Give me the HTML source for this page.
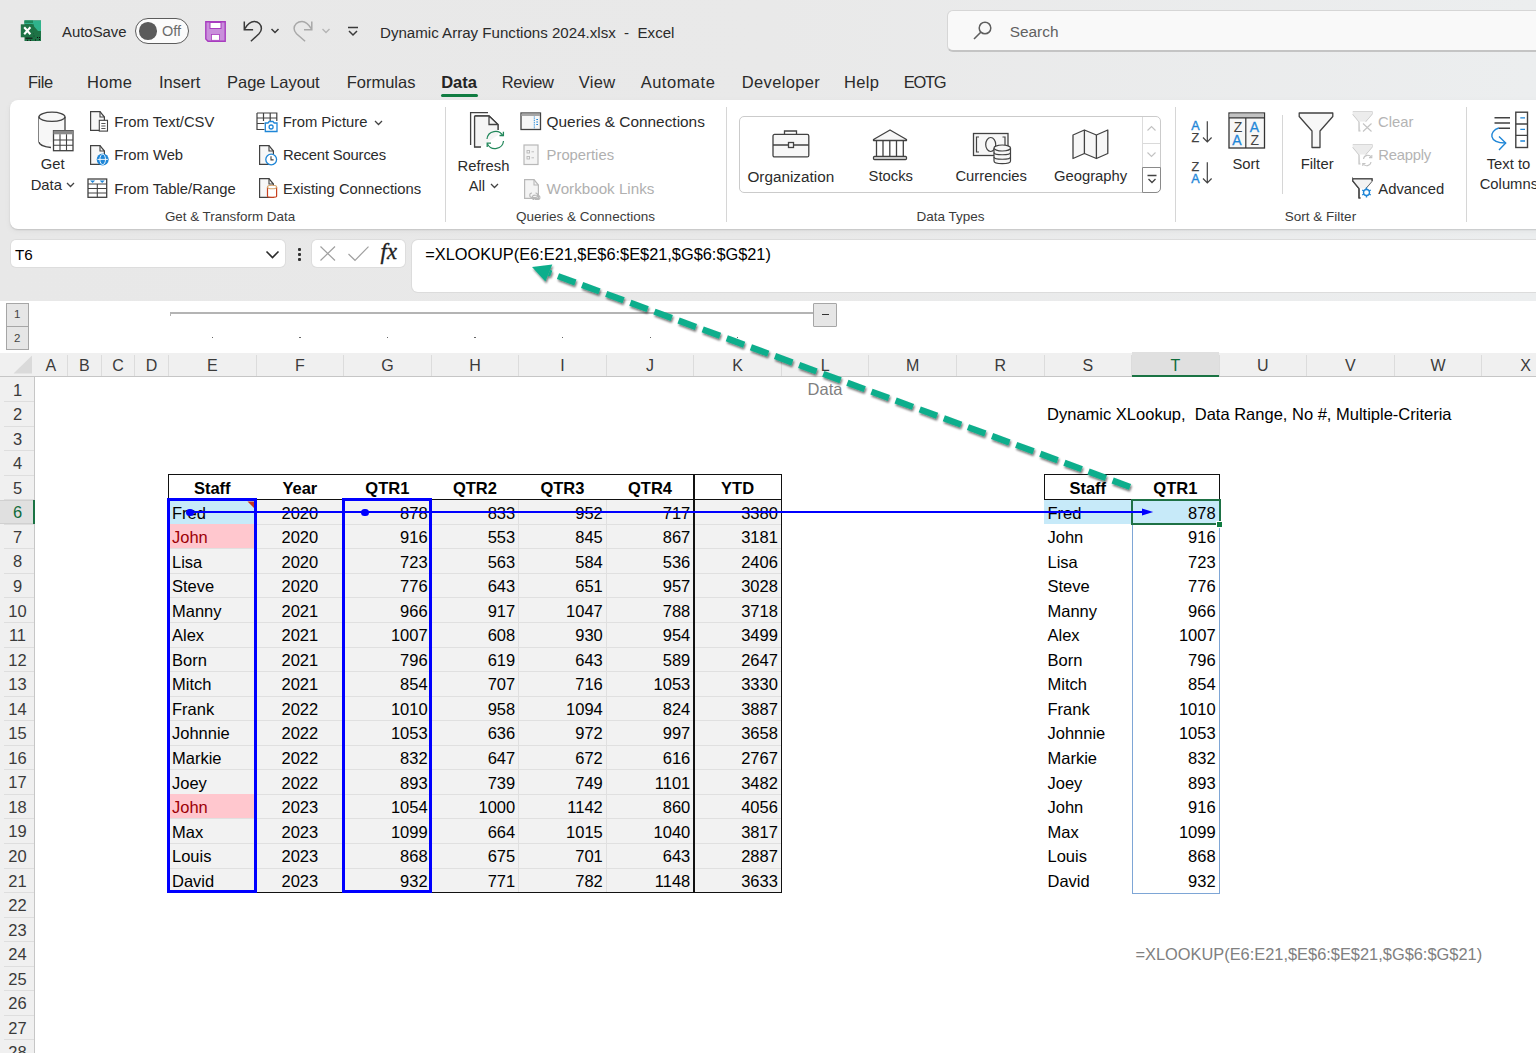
<!DOCTYPE html>
<html><head><meta charset="utf-8"><style>
html,body{margin:0;padding:0;}
body{width:1536px;height:1053px;position:relative;overflow:hidden;background:#fff;font-family:"Liberation Sans", sans-serif;}
.t{position:absolute;line-height:1;white-space:pre;}
svg{overflow:visible;}
</style></head><body>
<div style="position:absolute;left:0.00px;top:0.00px;width:1536.00px;height:301.00px;background:linear-gradient(90deg,#e8e8e8 0%,#e9e9e9 50%,#eceeef 100%);"></div><div style="position:absolute;left:10.00px;top:100.00px;width:1560.00px;height:128.50px;background:#fff;border-radius:8px;box-shadow:0 1px 1.5px rgba(0,0,0,0.13),0 2px 6px rgba(0,0,0,0.05);"></div><svg style="position:absolute;left:37px;top:111px;" width="38" height="41" viewBox="0 0 38 41">
<path d="M2 5.5 V31 C2 34 8 36 14 36.5" fill="#f7f7f7" stroke="#424242" stroke-width="1.3"/>
<path d="M2 5.5 V31 H16 V19 H28 V5.5 Z" fill="#f7f7f7"/>
<ellipse cx="15" cy="5.8" rx="13" ry="4.6" fill="#f7f7f7" stroke="#424242" stroke-width="1.3"/>
<path d="M28 6 V19" stroke="#424242" stroke-width="1.3"/>
<rect x="16.5" y="19.7" width="19.5" height="20" fill="#fff" stroke="#424242" stroke-width="1.3"/>
<rect x="16.5" y="19.7" width="19.5" height="3.6" fill="#8a8a8a"/>
<path d="M23 23.3 V39.7 M29.5 23.3 V39.7 M16.5 29 H36 M16.5 34.3 H36" stroke="#424242" stroke-width="1.1"/>
</svg><div class="t" style="left:32.70px;width:40px;text-align:center;top:157.27px;font-size:14.8px;color:#2b2b2b;font-weight:normal;">Get</div><div class="t" style="left:30.70px;top:177.77px;font-size:14.8px;color:#2b2b2b;font-weight:normal;">Data</div><svg style="position:absolute;left:66px;top:182px;" width="9" height="6" viewBox="0 0 9 6"><path d="M1 1 L4.5 4.5 L8 1" fill="none" stroke="#424242" stroke-width="1.3"/></svg><svg style="position:absolute;left:89px;top:110px;" width="20" height="22" viewBox="0 0 20 22"><path d="M1.6 1.6 H11 L15.4 7 V20.4 H1.6 Z" fill="#f7f7f7" stroke="#424242" stroke-width="1.2"/><path d="M11 1.6 V7 H15.4" fill="none" stroke="#424242" stroke-width="1.1"/><rect x="10.3" y="10.3" width="8.2" height="10.8" fill="#fff" stroke="#424242" stroke-width="1.1"/><path d="M12.3 13.5 H16.5 M12.3 16 H16.5 M12.3 18.5 H16.5" stroke="#424242" stroke-width="0.9"/></svg><div class="t" style="left:114.30px;top:114.67px;font-size:14.8px;color:#2b2b2b;font-weight:normal;">From Text/CSV</div><svg style="position:absolute;left:89px;top:143.5px;" width="20" height="22" viewBox="0 0 20 22"><path d="M1.6 1.6 H11 L15.4 7 V20.4 H1.6 Z" fill="#f7f7f7" stroke="#424242" stroke-width="1.2"/><path d="M11 1.6 V7 H15.4" fill="none" stroke="#424242" stroke-width="1.1"/><circle cx="13.7" cy="15.4" r="6" fill="#1f86d7"/><path d="M8.5 15.4 H18.9" stroke="#fff" stroke-width="0.9"/><ellipse cx="13.7" cy="15.4" rx="2.8" ry="5.2" fill="none" stroke="#fff" stroke-width="0.9"/></svg><div class="t" style="left:114.30px;top:148.37px;font-size:14.8px;color:#2b2b2b;font-weight:normal;">From Web</div><svg style="position:absolute;left:87px;top:177.5px;" width="21" height="21" viewBox="0 0 21 21"><rect x="1" y="1" width="18.7" height="18.3" fill="#fff" stroke="#424242" stroke-width="1.3"/><path d="M1 6 H19.7 M1 10.5 H19.7 M1 15 H19.7 M10.3 6 V19.3" stroke="#424242" stroke-width="1.1"/><path d="M3 2.4 L8.2 2.4 L5.6 5 Z M12.6 2.4 L17.8 2.4 L15.2 5 Z" fill="#1f86d7"/></svg><div class="t" style="left:114.30px;top:181.97px;font-size:14.8px;color:#2b2b2b;font-weight:normal;">From Table/Range</div><svg style="position:absolute;left:255.5px;top:111.5px;" width="23" height="21" viewBox="0 0 23 21"><path d="M1 1 H20.8 V9 M1 1 V17.5 H8.5 M1 6 H20.8 M1 11.5 H8.5 M7.5 1 V9 M14.2 1 V9" fill="none" stroke="#424242" stroke-width="1.2"/><path d="M9.3 11 H12 L13.2 9.5 H17 L18.2 11 H21 V19.5 H9.3 Z" fill="#fff" stroke="#1f86d7" stroke-width="1.3"/><circle cx="15.1" cy="15" r="2" fill="none" stroke="#1f86d7" stroke-width="1.3"/></svg><div class="t" style="left:282.70px;top:114.67px;font-size:14.8px;color:#2b2b2b;font-weight:normal;">From Picture</div><svg style="position:absolute;left:374px;top:120px;" width="9" height="6" viewBox="0 0 9 6"><path d="M1 1 L4.5 4.5 L8 1" fill="none" stroke="#424242" stroke-width="1.3"/></svg><svg style="position:absolute;left:258px;top:143.5px;" width="21" height="22" viewBox="0 0 21 22"><path d="M1.6 1.6 H11 L15.4 7 V20.4 H1.6 Z" fill="#f7f7f7" stroke="#424242" stroke-width="1.2"/><path d="M11 1.6 V7 H15.4" fill="none" stroke="#424242" stroke-width="1.1"/><circle cx="13.2" cy="15.5" r="5.4" fill="#fff" stroke="#1f86d7" stroke-width="1.3"/><path d="M13 12.3 V15.9 H15.6" fill="none" stroke="#424242" stroke-width="1.1"/></svg><div class="t" style="left:283.00px;top:148.37px;font-size:14.8px;color:#2b2b2b;font-weight:normal;letter-spacing:-0.17px;">Recent Sources</div><svg style="position:absolute;left:258px;top:177px;" width="21" height="22" viewBox="0 0 21 22"><path d="M1.6 1.6 H11 L15.4 7 V20.4 H1.6 Z" fill="#f7f7f7" stroke="#424242" stroke-width="1.2"/><path d="M11 1.6 V7 H15.4" fill="none" stroke="#424242" stroke-width="1.1"/><path d="M9.5 10 V19.3 C9.5 20.6 18.6 20.6 18.6 19.3 V10" fill="#fff" stroke="#c9401e" stroke-width="1.2"/><ellipse cx="14.05" cy="10" rx="4.55" ry="1.8" fill="#fff" stroke="#d4a26a" stroke-width="1.1"/></svg><div class="t" style="left:283.00px;top:181.97px;font-size:14.8px;color:#2b2b2b;font-weight:normal;">Existing Connections</div><div class="t" style="left:130.00px;width:200px;text-align:center;top:209.66px;font-size:13.4px;color:#3b3b3b;font-weight:normal;">Get &amp; Transform Data</div><div style="position:absolute;left:445.00px;top:107.00px;width:1.00px;height:115.00px;background:#d6d6d6;"></div><svg style="position:absolute;left:469px;top:111px;" width="38" height="40" viewBox="0 0 38 40">
<path d="M1.6 34 V1.6 H19" fill="none" stroke="#424242" stroke-width="1.3"/>
<path d="M5.6 5 H20 L29 13.5 V19 M11 35.5 H5.6 V5" fill="#f5f5f5" stroke="#424242" stroke-width="1.3"/>
<path d="M5.6 5 H20 L29 13.5 V24 L12 36 H5.6 Z" fill="#f5f5f5"/>
<path d="M5.6 5 H20 L29 13.5 V19 M12 36 H5.6 V5 M20 5 V13.5 H29" fill="none" stroke="#424242" stroke-width="1.3"/>
<path d="M18 28 A8.5 8.5 0 0 1 34 25" fill="none" stroke="#21875a" stroke-width="1.2"/>
<path d="M34.5 36 A8.5 8.5 0 0 1 18.5 39" fill="none" stroke="#21875a" stroke-width="1.2" transform="translate(0,-6)"/>
<path d="M30.5 24.5 H34.4 V20.8" fill="none" stroke="#21875a" stroke-width="1.3"/>
<path d="M22 32.2 H18.2 V36" fill="none" stroke="#21875a" stroke-width="1.3"/>
</svg><div class="t" style="left:453.50px;width:60px;text-align:center;top:158.57px;font-size:14.8px;color:#2b2b2b;font-weight:normal;">Refresh</div><div class="t" style="left:468.70px;top:178.57px;font-size:14.8px;color:#2b2b2b;font-weight:normal;">All</div><svg style="position:absolute;left:490px;top:183px;" width="9" height="6" viewBox="0 0 9 6"><path d="M1 1 L4.5 4.5 L8 1" fill="none" stroke="#424242" stroke-width="1.3"/></svg><svg style="position:absolute;left:519.5px;top:111.5px;" width="22" height="19" viewBox="0 0 22 19"><rect x="1" y="1" width="19.5" height="16.5" fill="#f7f7f7" stroke="#424242" stroke-width="1.3"/><rect x="1.5" y="1.5" width="18.5" height="2.5" fill="#a6a6a6"/><path d="M14.3 4.5 V17" stroke="#1f86d7" stroke-width="1" stroke-dasharray="1 0.8"/><path d="M16.3 7.5 H18 M16.3 10 H18 M16.3 12.5 H18" stroke="#1f86d7" stroke-width="1"/></svg><div class="t" style="left:546.60px;top:114.26px;font-size:15.4px;color:#2b2b2b;font-weight:normal;">Queries &amp; Connections</div><svg style="position:absolute;left:522.5px;top:143.5px;" width="17" height="22" viewBox="0 0 17 22"><rect x="1" y="1" width="14" height="19.5" fill="#f4f4f4" stroke="#b8b8b8" stroke-width="1.2"/><rect x="4" y="6.5" width="2.5" height="2.5" fill="none" stroke="#b8b8b8" stroke-width="0.9"/><rect x="4" y="12.5" width="2.5" height="2.5" fill="none" stroke="#b8b8b8" stroke-width="0.9"/><path d="M8.5 7.8 H11 M8.5 13.8 H11" stroke="#b8b8b8" stroke-width="0.9"/></svg><div class="t" style="left:546.60px;top:147.67px;font-size:14.8px;color:#b0b0b0;font-weight:normal;">Properties</div><svg style="position:absolute;left:522.5px;top:177.5px;" width="20" height="22" viewBox="0 0 20 22"><path d="M1.6 1.6 H11 L15.4 7 V20.4 H1.6 Z" fill="#f4f4f4" stroke="#b8b8b8" stroke-width="1.2"/><path d="M11 1.6 V7 H15.4" fill="none" stroke="#b8b8b8" stroke-width="1.1"/><path d="M9 15 C6 15 6 19.5 9 19.5 H12.5 C15.5 19.5 15.5 15 12.5 15 M11.5 17.3 C8.5 17.3 8.5 21.5 11.5 21.5" fill="none" stroke="#b8b8b8" stroke-width="1.1"/><path d="M10.5 17.3 H14.5 C17.7 17.3 17.7 21.5 14.5 21.5 H12" fill="none" stroke="#b8b8b8" stroke-width="1.1"/></svg><div class="t" style="left:546.60px;top:181.03px;font-size:15.2px;color:#b0b0b0;font-weight:normal;">Workbook Links</div><div class="t" style="left:485.50px;width:200px;text-align:center;top:209.57px;font-size:13.5px;color:#3b3b3b;font-weight:normal;">Queries &amp; Connections</div><div style="position:absolute;left:726.00px;top:107.00px;width:1.00px;height:115.00px;background:#d6d6d6;"></div><div style="position:absolute;left:739.30px;top:116.20px;width:421.50px;height:76.50px;border:1px solid #cbcbcb;border-radius:5px;box-sizing:border-box;"></div><div style="position:absolute;left:1142.30px;top:116.70px;width:1.00px;height:76.00px;background:#dcdcdc;"></div><div style="position:absolute;left:1142.80px;top:142.60px;width:17.50px;height:1.20px;background:#dadada;"></div><div style="position:absolute;left:1142.30px;top:167.30px;width:18.50px;height:25.50px;border:1px solid #8a8a8a;border-radius:0 0 5px 0;box-sizing:border-box;background:#fff;"></div><svg style="position:absolute;left:1146px;top:125px;" width="11" height="7" viewBox="0 0 11 7"><path d="M1.5 5.5 L5.5 1.5 L9.5 5.5" fill="none" stroke="#c2c2c2" stroke-width="1.1"/></svg><svg style="position:absolute;left:1146px;top:151px;" width="11" height="7" viewBox="0 0 11 7"><path d="M1.5 1.5 L5.5 5.5 L9.5 1.5" fill="none" stroke="#c2c2c2" stroke-width="1.1"/></svg><svg style="position:absolute;left:1145.5px;top:174px;" width="12" height="11" viewBox="0 0 12 11"><path d="M1.5 1.5 H10.5 M2.5 5 L6 8.5 L9.5 5" fill="none" stroke="#424242" stroke-width="1.3"/></svg><svg style="position:absolute;left:772px;top:130px;" width="38" height="28" viewBox="0 0 38 28"><rect x="1" y="4.4" width="35.8" height="22.5" rx="1.5" fill="#f7f7f7" stroke="#424242" stroke-width="1.3"/><path d="M12.5 4.4 V1 H24.5 V4.4" fill="none" stroke="#424242" stroke-width="1.3"/><path d="M1 15 H16.5 M21.5 15 H36.8" stroke="#424242" stroke-width="1.3"/><rect x="16.5" y="12.5" width="5" height="5" fill="#f7f7f7" stroke="#424242" stroke-width="1.3"/></svg><div class="t" style="left:730.80px;width:120px;text-align:center;top:168.65px;font-size:15.3px;color:#2b2b2b;font-weight:normal;">Organization</div><svg style="position:absolute;left:871.5px;top:128.5px;" width="37" height="32" viewBox="0 0 37 32"><path d="M1.5 10.5 L18 1 L34.5 10.5 V11.5 H1.5 Z" fill="#f7f7f7" stroke="#424242" stroke-width="1.3" stroke-linejoin="round"/><path d="M4.5 11.5 V27.5 M11 11.5 V27.5 M17.8 11.5 V27.5 M24.5 11.5 V27.5 M31.3 11.5 V27.5" stroke="#424242" stroke-width="1.3"/><rect x="1.5" y="27.5" width="33" height="3" rx="1" fill="#f7f7f7" stroke="#424242" stroke-width="1.3"/></svg><div class="t" style="left:850.80px;width:80px;text-align:center;top:169.07px;font-size:14.8px;color:#2b2b2b;font-weight:normal;">Stocks</div><svg style="position:absolute;left:971.5px;top:132px;" width="42" height="34" viewBox="0 0 42 34"><rect x="1.5" y="1.5" width="34.5" height="22" fill="#f7f7f7" stroke="#424242" stroke-width="1.3"/><path d="M7 5 H4.5 V20 H7 M30.5 5 H33 V20 H30.5" fill="none" stroke="#424242" stroke-width="1.2"/><ellipse cx="18.7" cy="12.5" rx="5" ry="7" fill="none" stroke="#424242" stroke-width="1.2"/><g fill="#f7f7f7" stroke="#424242" stroke-width="1.2"><path d="M22 16 V29 C22 32.5 38.5 32.5 38.5 29 V16"/><ellipse cx="30.25" cy="16" rx="8.25" ry="3"/><path d="M22 20.5 C22 23.5 38.5 23.5 38.5 20.5 M22 25 C22 28 38.5 28 38.5 25" fill="none"/></g></svg><div class="t" style="left:941.20px;width:100px;text-align:center;top:168.77px;font-size:14.8px;color:#2b2b2b;font-weight:normal;">Currencies</div><svg style="position:absolute;left:1071.5px;top:128.5px;" width="38" height="32" viewBox="0 0 38 32"><path d="M1 6 L12.4 1 L24.4 6 L35.8 1 V24.5 L24.4 29.5 L12.4 24.5 L1 29.5 Z" fill="#f7f7f7" stroke="#424242" stroke-width="1.3" stroke-linejoin="round"/><path d="M12.4 1 V24.5 M24.4 6 V29.5" stroke="#424242" stroke-width="1.3"/></svg><div class="t" style="left:1040.60px;width:100px;text-align:center;top:168.77px;font-size:14.8px;color:#2b2b2b;font-weight:normal;">Geography</div><div class="t" style="left:890.50px;width:120px;text-align:center;top:209.57px;font-size:13.5px;color:#3b3b3b;font-weight:normal;">Data Types</div><div style="position:absolute;left:1174.50px;top:107.00px;width:1.00px;height:115.00px;background:#d6d6d6;"></div><svg style="position:absolute;left:1190.5px;top:120.5px;" width="22" height="22" viewBox="0 0 22 22"><text x="0.2" y="9.3" font-family="Liberation Sans" font-size="12.6" fill="#1f86d7" stroke="#1f86d7" stroke-width="0.35">A</text><text x="0.6" y="21" font-family="Liberation Sans" font-size="12.6" fill="#424242" stroke="#424242" stroke-width="0.25">Z</text><path d="M16.3 0.3 V20.5 M12 16.5 L16.3 20.8 L20.6 16.5" fill="none" stroke="#424242" stroke-width="1.2"/></svg><svg style="position:absolute;left:1190.5px;top:161.5px;" width="22" height="22" viewBox="0 0 22 22"><text x="0.2" y="21" font-family="Liberation Sans" font-size="12.6" fill="#1f86d7" stroke="#1f86d7" stroke-width="0.35">A</text><text x="0.6" y="9.3" font-family="Liberation Sans" font-size="12.6" fill="#424242" stroke="#424242" stroke-width="0.25">Z</text><path d="M16.3 0.3 V20.5 M12 16.5 L16.3 20.8 L20.6 16.5" fill="none" stroke="#424242" stroke-width="1.2"/></svg><svg style="position:absolute;left:1227.5px;top:111.5px;" width="38" height="38" viewBox="0 0 38 38"><rect x="1" y="1" width="35.5" height="35" fill="#f7f7f7" stroke="#333" stroke-width="1.3"/><rect x="1.6" y="1.6" width="34.3" height="4" fill="#c2c2c2"/><path d="M1 5.8 H36.5 M17.8 5.8 V36" stroke="#333" stroke-width="1.2"/><g font-family="Liberation Sans" font-size="14"><text x="5.8" y="20" fill="#424242">Z</text><text x="4.3" y="33" fill="#1f86d7" stroke="#1f86d7" stroke-width="0.3">A</text><text x="21.8" y="20" fill="#1f86d7" stroke="#1f86d7" stroke-width="0.3">A</text><text x="22.6" y="33" fill="#424242">Z</text></g></svg><div class="t" style="left:1216.00px;width:60px;text-align:center;top:157.37px;font-size:14.8px;color:#2b2b2b;font-weight:normal;">Sort</div><div style="position:absolute;left:1281.50px;top:114.80px;width:1.00px;height:79.00px;background:#d6d6d6;"></div><svg style="position:absolute;left:1298px;top:111.5px;" width="37" height="37" viewBox="0 0 37 37"><path d="M1.2 1 H34.8 V4.5 L22 19 V35.5 H14 V19 L1.2 4.5 Z" fill="#f7f7f7" stroke="#424242" stroke-width="1.3" stroke-linejoin="round"/></svg><div class="t" style="left:1287.20px;width:60px;text-align:center;top:157.37px;font-size:14.8px;color:#2b2b2b;font-weight:normal;">Filter</div><svg style="position:absolute;left:1351.5px;top:110.5px;" width="22" height="22" viewBox="0 0 22 22"><path d="M0.8 0.8 H20 V3 L13.5 10.5 M7 10.5 V20 H8.5 M7 10.5 L0.8 3 Z" fill="#ececec" stroke="#c4c4c4" stroke-width="1.2"/><path d="M0.8 0.8 H20 V3 L13.5 10.5 H7 L0.8 3 Z" fill="#ececec"/><path d="M11 12.5 L19.5 20.5 M19.5 12.5 L11 20.5" stroke="#c4c4c4" stroke-width="1.1"/></svg><div class="t" style="left:1378.00px;top:114.87px;font-size:14.8px;color:#b4b4b4;font-weight:normal;">Clear</div><svg style="position:absolute;left:1351.5px;top:143.5px;" width="22" height="23" viewBox="0 0 22 23"><path d="M0.8 0.8 H20 V3 L13.5 10.5 M7 10.5 V20 H8.5 M7 10.5 L0.8 3 Z" fill="#ececec" stroke="#c4c4c4" stroke-width="1.2"/><path d="M0.8 0.8 H20 V3 L13.5 10.5 H7 L0.8 3 Z" fill="#ececec"/><path d="M11.5 15 A4.3 4.3 0 0 1 19.5 13.5 M19 18 A4.3 4.3 0 0 1 11 19.5" fill="none" stroke="#c4c4c4" stroke-width="1.1"/><path d="M17 13.6 H19.8 V11" fill="none" stroke="#c4c4c4" stroke-width="1.1"/><path d="M13.5 19.5 H10.8 V22" fill="none" stroke="#c4c4c4" stroke-width="1.1"/></svg><div class="t" style="left:1378.30px;top:148.07px;font-size:14.8px;color:#b4b4b4;font-weight:normal;letter-spacing:-0.22px;">Reapply</div><svg style="position:absolute;left:1351.5px;top:177.5px;" width="22" height="22" viewBox="0 0 22 22"><path d="M0.8 0.8 H20 V3 L13.5 10.5 M7 10.5 V20 H8.5 M7 10.5 L0.8 3 V0.8 Z" fill="#f3f3f3" stroke="#424242" stroke-width="1.2"/><path d="M0.8 0.8 H20 V3 L13.5 10.5 H7 L0.8 3 Z" fill="#f3f3f3"/><path d="M0.8 0.8 H20 V3 M0.8 0.8 V3 L7 10.5 V20 H8.5" fill="none" stroke="#424242" stroke-width="1.2"/><g transform="translate(14.5,14.5)" stroke="#1f86d7" stroke-width="1.4" fill="none"><circle r="3"/><path d="M0 -5 V-3 M0 3 V5 M-4.3 -2.5 L-2.6 -1.5 M2.6 1.5 L4.3 2.5 M-4.3 2.5 L-2.6 1.5 M2.6 -1.5 L4.3 -2.5"/></g></svg><div class="t" style="left:1378.30px;top:181.87px;font-size:14.8px;color:#2b2b2b;font-weight:normal;">Advanced</div><div class="t" style="left:1260.50px;width:120px;text-align:center;top:209.57px;font-size:13.5px;color:#3b3b3b;font-weight:normal;">Sort &amp; Filter</div><div style="position:absolute;left:1465.50px;top:107.00px;width:1.00px;height:115.00px;background:#d6d6d6;"></div><svg style="position:absolute;left:1487.5px;top:111px;" width="42" height="41" viewBox="0 0 42 41"><path d="M6.5 6.8 H22 M6.5 12 H22 M10.5 17.2 H22" stroke="#424242" stroke-width="1.5"/><rect x="27.8" y="1.2" width="11.7" height="35.3" fill="#fff" stroke="#424242" stroke-width="1.4"/><path d="M27.8 13 H39.5 M27.8 24.4 H39.5" stroke="#424242" stroke-width="1.3"/><path d="M32.3 6.8 H37 M32.3 18.4 H37 M32.3 30 H37" stroke="#1f86d7" stroke-width="1.3"/><path d="M10.8 17 C1 20, 0 32, 17.5 32" fill="none" stroke="#1f86d7" stroke-width="1.4"/><path d="M11 25.5 L17.7 32 L11 39" fill="none" stroke="#1f86d7" stroke-width="1.4"/></svg><div class="t" style="left:1468.50px;width:80px;text-align:center;top:156.97px;font-size:14.8px;color:#2b2b2b;font-weight:normal;">Text to</div><div class="t" style="left:1479.70px;top:177.47px;font-size:14.8px;color:#2b2b2b;font-weight:normal;">Columns</div><svg style="position:absolute;left:20px;top:20px;" width="22" height="22" viewBox="0 0 22 22">
<rect x="4.5" y="0.5" width="16.5" height="20.5" fill="#1e7346"/>
<path d="M4.5 0.5 H21 V11 L18 11 L12 4 L4.5 4 Z" fill="#2fb38c"/>
<path d="M4.5 0.5 H13 V3 H4.5 Z" fill="#1f8a5c"/>
<g fill="#101010"><rect x="5.5" y="17.5" width="7" height="1.2"/><rect x="13" y="13" width="1" height="1.2"/><rect x="13" y="15.5" width="1.2" height="1.2"/><rect x="17" y="17" width="1" height="1"/><rect x="19" y="17" width="1" height="1"/><rect x="15" y="19.5" width="1" height="1"/><rect x="19" y="19" width="1" height="1"/><rect x="7" y="19.8" width="1" height="1"/><rect x="10" y="19.8" width="1" height="1"/></g>
<rect x="0.8" y="4.3" width="13" height="13" fill="#1e7346"/>
<path d="M4.2 7.2 L10.4 14.2 M10.4 7.2 L4.2 14.2" stroke="#fff" stroke-width="2.1"/>
</svg><div class="t" style="left:62.00px;top:24.79px;font-size:14.9px;color:#2b2b2b;font-weight:normal;">AutoSave</div><div style="position:absolute;left:135.00px;top:18.00px;width:53.50px;height:25.50px;border:1.5px solid #5c5c5c;border-radius:13px;background:#fbfbfb;box-sizing:border-box;"></div><div style="position:absolute;left:139.00px;top:22.00px;width:17.60px;height:17.60px;border-radius:50%;background:#5a5a5a;"></div><div class="t" style="left:162.00px;top:24.33px;font-size:14.5px;color:#6b6b6b;font-weight:normal;">Off</div><svg style="position:absolute;left:205px;top:21px;" width="21" height="21" viewBox="0 0 21 21">
<path d="M0.8 0.8 H20.2 V20.2 H3 L0.8 18 Z" fill="#c98fdb" stroke="#a83cbf" stroke-width="1.4"/>
<rect x="5" y="1.5" width="11" height="6" fill="#fff" stroke="#a83cbf" stroke-width="1"/>
<rect x="6.5" y="13.5" width="8" height="5.8" fill="#fff" stroke="#a83cbf" stroke-width="0.8"/>
</svg><svg style="position:absolute;left:243px;top:20px;" width="22" height="23" viewBox="0 0 22 23">
<path d="M1.3 1.4 V9.7 H10.1" fill="none" stroke="#3a3a3a" stroke-width="1.5"/>
<path d="M1.9 8.6 C4.5 4 8 1.4 11.2 1.4 C15.3 1.4 18.4 4.5 18.4 8.6 C18.4 10.8 17.5 12.3 16 13.8 L7.9 21.3" fill="none" stroke="#3a3a3a" stroke-width="1.5"/>
</svg><svg style="position:absolute;left:270px;top:27px;" width="10" height="8" viewBox="0 0 10 8"><path d="M1.5 2 L5 5.5 L8.5 2" fill="none" stroke="#3a3a3a" stroke-width="1.5"/></svg><svg style="position:absolute;left:293px;top:20px;" width="22" height="23" viewBox="0 0 22 23">
<path d="M18.8 1.4 V9.7 H11" fill="none" stroke="#a8a8a8" stroke-width="1.5"/>
<path d="M18.2 8.6 C15.5 4 12 1.4 9 1.4 C4.5 1.4 1.1 4.5 1.1 8.6 C1.1 10.8 2 12.3 3.5 13.8 L12.1 21.3" fill="none" stroke="#a8a8a8" stroke-width="1.5"/>
</svg><svg style="position:absolute;left:321px;top:27px;" width="10" height="8" viewBox="0 0 10 8"><path d="M1.5 2 L5 5.5 L8.5 2" fill="none" stroke="#b5b5b5" stroke-width="1.4"/></svg><svg style="position:absolute;left:347px;top:26px;" width="12" height="11" viewBox="0 0 12 11"><path d="M1 1.5 H11 M2 5 L6 9 L10 5" fill="none" stroke="#3a3a3a" stroke-width="1.5"/></svg><div class="t" style="left:380.00px;top:24.72px;font-size:15.1px;color:#2b2b2b;font-weight:normal;">Dynamic Array Functions 2024.xlsx&nbsp;&nbsp;-&nbsp;&nbsp;Excel</div><div style="position:absolute;left:946.50px;top:10.00px;width:640.00px;height:42.00px;background:#f9f9f9;border:1px solid #d6d6d6;border-bottom:2px solid #c4c4c4;border-radius:6px;box-sizing:border-box;"></div><svg style="position:absolute;left:973px;top:21px;" width="20" height="20" viewBox="0 0 20 20"><circle cx="12" cy="7" r="5.8" fill="none" stroke="#5e5e5e" stroke-width="1.5"/><path d="M8 11 L1 18" stroke="#5e5e5e" stroke-width="1.6"/></svg><div class="t" style="left:1009.70px;top:24.36px;font-size:15.4px;color:#616161;font-weight:normal;">Search</div><div class="t" style="left:28.00px;top:74.03px;font-size:16.5px;color:#2b2b2b;font-weight:normal;letter-spacing:-0.5px;">File</div><div class="t" style="left:87.00px;top:74.03px;font-size:16.5px;color:#2b2b2b;font-weight:normal;letter-spacing:0.3px;">Home</div><div class="t" style="left:159.00px;top:74.03px;font-size:16.5px;color:#2b2b2b;font-weight:normal;letter-spacing:0px;">Insert</div><div class="t" style="left:227.00px;top:74.03px;font-size:16.5px;color:#2b2b2b;font-weight:normal;letter-spacing:0px;">Page Layout</div><div class="t" style="left:346.70px;top:74.03px;font-size:16.5px;color:#2b2b2b;font-weight:normal;letter-spacing:0px;">Formulas</div><div class="t" style="left:441.20px;top:74.03px;font-size:16.5px;color:#242424;font-weight:bold;">Data</div><div class="t" style="left:501.70px;top:74.03px;font-size:16.5px;color:#2b2b2b;font-weight:normal;letter-spacing:-0.35px;">Review</div><div class="t" style="left:578.70px;top:74.03px;font-size:16.5px;color:#2b2b2b;font-weight:normal;letter-spacing:0.3px;">View</div><div class="t" style="left:640.70px;top:74.03px;font-size:16.5px;color:#2b2b2b;font-weight:normal;letter-spacing:0.5px;">Automate</div><div class="t" style="left:741.80px;top:74.03px;font-size:16.5px;color:#2b2b2b;font-weight:normal;letter-spacing:0.35px;">Developer</div><div class="t" style="left:843.90px;top:74.03px;font-size:16.5px;color:#2b2b2b;font-weight:normal;letter-spacing:0.35px;">Help</div><div class="t" style="left:903.70px;top:74.03px;font-size:16.5px;color:#2b2b2b;font-weight:normal;letter-spacing:-1.3px;">EOTG</div><div style="position:absolute;left:440.50px;top:94.00px;width:37.50px;height:3.00px;background:#107c41;border-radius:2px;"></div><div style="position:absolute;left:11.00px;top:240.00px;width:274.00px;height:27.00px;background:#fff;border-radius:5px;box-shadow:0 0 0 1px #dddddd;"></div><div class="t" style="left:15.00px;top:247.33px;font-size:15.2px;color:#000;font-weight:normal;">T6</div><svg style="position:absolute;left:265px;top:250px;" width="15" height="9" viewBox="0 0 15 9"><path d="M1.5 1.5 L7.5 7.5 L13.5 1.5" fill="none" stroke="#2b2b2b" stroke-width="1.6"/></svg><div style="position:absolute;left:297.50px;top:247.50px;width:3.00px;height:3.00px;background:#333;border-radius:1px;"></div><div style="position:absolute;left:297.50px;top:252.50px;width:3.00px;height:3.00px;background:#333;border-radius:1px;"></div><div style="position:absolute;left:297.50px;top:257.50px;width:3.00px;height:3.00px;background:#333;border-radius:1px;"></div><div style="position:absolute;left:312.30px;top:240.00px;width:92.70px;height:27.00px;background:#fff;border-radius:5px;box-shadow:0 0 0 1px #dddddd;"></div><svg style="position:absolute;left:320px;top:246px;" width="16" height="15" viewBox="0 0 16 15"><path d="M0.5 0.5 L15 14.5 M15 0.5 L0.5 14.5" stroke="#a0a0a0" stroke-width="1.2"/></svg><svg style="position:absolute;left:348px;top:246px;" width="22" height="15" viewBox="0 0 22 15"><path d="M0.5 8 L7 14.3 L20.5 0.7" fill="none" stroke="#a0a0a0" stroke-width="1.2"/></svg><div class="t" style="left:380.50px;top:241.45px;font-size:22.5px;color:#222;font-weight:normal;font-family:'Liberation Serif',serif;font-style:italic;letter-spacing:0.3px;-webkit-text-stroke:0.35px #222;">fx</div><div style="position:absolute;left:411.80px;top:240.00px;width:1130.00px;height:51.50px;background:#fff;border-radius:6px;box-shadow:0 0 0 1px #dcdcdc;"></div><div class="t" style="left:425.20px;top:246.36px;font-size:16.35px;color:#000;font-weight:normal;">=XLOOKUP(E6:E21,$E$6:$E$21,$G$6:$G$21)</div><div style="position:absolute;left:5.50px;top:302.50px;width:23.20px;height:24.00px;background:#e6e6e6;border:1px solid #a6a6a6;box-sizing:border-box;"></div><div style="position:absolute;left:5.50px;top:326.30px;width:23.20px;height:24.20px;background:#e6e6e6;border:1px solid #a6a6a6;box-sizing:border-box;"></div><div class="t" style="left:7.10px;width:20px;text-align:center;top:308.77px;font-size:11.5px;color:#444;font-weight:normal;">1</div><div class="t" style="left:7.10px;width:20px;text-align:center;top:332.77px;font-size:11.5px;color:#444;font-weight:normal;">2</div><div style="position:absolute;left:169.50px;top:312.00px;width:644.00px;height:2.00px;background:#b4b4b4;"></div><div style="position:absolute;left:169.50px;top:312.00px;width:1.60px;height:4.00px;background:#b4b4b4;"></div><div style="position:absolute;left:813.40px;top:302.50px;width:23.50px;height:24.00px;background:#e6e6e6;border:1px solid #a6a6a6;box-sizing:border-box;border-radius:1px;"></div><div style="position:absolute;left:821.50px;top:314.00px;width:7.00px;height:1.30px;background:#333;"></div><div style="position:absolute;left:211.80px;top:336.50px;width:1.20px;height:1.20px;background:#666;"></div><div style="position:absolute;left:299.40px;top:336.50px;width:1.20px;height:1.20px;background:#666;"></div><div style="position:absolute;left:386.90px;top:336.50px;width:1.20px;height:1.20px;background:#666;"></div><div style="position:absolute;left:474.40px;top:336.50px;width:1.20px;height:1.20px;background:#666;"></div><div style="position:absolute;left:562.00px;top:336.50px;width:1.20px;height:1.20px;background:#666;"></div><div style="position:absolute;left:649.50px;top:336.50px;width:1.20px;height:1.20px;background:#666;"></div><div style="position:absolute;left:737.00px;top:336.50px;width:1.20px;height:1.20px;background:#666;"></div><div style="position:absolute;left:0.00px;top:352.50px;width:1536.00px;height:24.00px;background:#f0f0f0;"></div><div style="position:absolute;left:0.00px;top:376.00px;width:1536.00px;height:1.00px;background:#c6c6c6;"></div><div style="position:absolute;left:0.00px;top:376.50px;width:34.00px;height:700.00px;background:#f0f0f0;"></div><div style="position:absolute;left:34.00px;top:376.50px;width:1.00px;height:700.00px;background:#c6c6c6;"></div><svg style="position:absolute;left:13px;top:355px;" width="20" height="19" viewBox="0 0 20 19"><path d="M19 0.5 V18.5 H0.5 Z" fill="#dadada"/></svg><div style="position:absolute;left:67.10px;top:354.50px;width:1.00px;height:21.50px;background:#dcdcdc;"></div><div style="position:absolute;left:100.70px;top:354.50px;width:1.00px;height:21.50px;background:#dcdcdc;"></div><div style="position:absolute;left:134.30px;top:354.50px;width:1.00px;height:21.50px;background:#dcdcdc;"></div><div style="position:absolute;left:167.90px;top:354.50px;width:1.00px;height:21.50px;background:#dcdcdc;"></div><div style="position:absolute;left:255.55px;top:354.50px;width:1.00px;height:21.50px;background:#dcdcdc;"></div><div style="position:absolute;left:343.10px;top:354.50px;width:1.00px;height:21.50px;background:#dcdcdc;"></div><div style="position:absolute;left:430.65px;top:354.50px;width:1.00px;height:21.50px;background:#dcdcdc;"></div><div style="position:absolute;left:518.20px;top:354.50px;width:1.00px;height:21.50px;background:#dcdcdc;"></div><div style="position:absolute;left:605.75px;top:354.50px;width:1.00px;height:21.50px;background:#dcdcdc;"></div><div style="position:absolute;left:693.30px;top:354.50px;width:1.00px;height:21.50px;background:#dcdcdc;"></div><div style="position:absolute;left:780.85px;top:354.50px;width:1.00px;height:21.50px;background:#dcdcdc;"></div><div style="position:absolute;left:868.40px;top:354.50px;width:1.00px;height:21.50px;background:#dcdcdc;"></div><div style="position:absolute;left:955.95px;top:354.50px;width:1.00px;height:21.50px;background:#dcdcdc;"></div><div style="position:absolute;left:1043.50px;top:354.50px;width:1.00px;height:21.50px;background:#dcdcdc;"></div><div style="position:absolute;left:1131.05px;top:354.50px;width:1.00px;height:21.50px;background:#dcdcdc;"></div><div style="position:absolute;left:1218.60px;top:354.50px;width:1.00px;height:21.50px;background:#dcdcdc;"></div><div style="position:absolute;left:1306.15px;top:354.50px;width:1.00px;height:21.50px;background:#dcdcdc;"></div><div style="position:absolute;left:1393.70px;top:354.50px;width:1.00px;height:21.50px;background:#dcdcdc;"></div><div style="position:absolute;left:1481.25px;top:354.50px;width:1.00px;height:21.50px;background:#dcdcdc;"></div><div style="position:absolute;left:1568.80px;top:354.50px;width:1.00px;height:21.50px;background:#dcdcdc;"></div><div style="position:absolute;left:1131.55px;top:352.30px;width:87.55px;height:23.70px;background:#e0e0e0;"></div><div style="position:absolute;left:1131.55px;top:374.60px;width:87.55px;height:2.00px;background:#1a7343;"></div><div class="t" style="left:20.80px;width:60px;text-align:center;top:358.06px;font-size:16px;color:#3b3b3b;font-weight:normal;">A</div><div class="t" style="left:54.40px;width:60px;text-align:center;top:358.06px;font-size:16px;color:#3b3b3b;font-weight:normal;">B</div><div class="t" style="left:88.00px;width:60px;text-align:center;top:358.06px;font-size:16px;color:#3b3b3b;font-weight:normal;">C</div><div class="t" style="left:121.60px;width:60px;text-align:center;top:358.06px;font-size:16px;color:#3b3b3b;font-weight:normal;">D</div><div class="t" style="left:182.28px;width:60px;text-align:center;top:358.06px;font-size:16px;color:#3b3b3b;font-weight:normal;">E</div><div class="t" style="left:269.82px;width:60px;text-align:center;top:358.06px;font-size:16px;color:#3b3b3b;font-weight:normal;">F</div><div class="t" style="left:357.38px;width:60px;text-align:center;top:358.06px;font-size:16px;color:#3b3b3b;font-weight:normal;">G</div><div class="t" style="left:444.93px;width:60px;text-align:center;top:358.06px;font-size:16px;color:#3b3b3b;font-weight:normal;">H</div><div class="t" style="left:532.48px;width:60px;text-align:center;top:358.06px;font-size:16px;color:#3b3b3b;font-weight:normal;">I</div><div class="t" style="left:620.02px;width:60px;text-align:center;top:358.06px;font-size:16px;color:#3b3b3b;font-weight:normal;">J</div><div class="t" style="left:707.57px;width:60px;text-align:center;top:358.06px;font-size:16px;color:#3b3b3b;font-weight:normal;">K</div><div class="t" style="left:795.12px;width:60px;text-align:center;top:358.06px;font-size:16px;color:#3b3b3b;font-weight:normal;">L</div><div class="t" style="left:882.67px;width:60px;text-align:center;top:358.06px;font-size:16px;color:#3b3b3b;font-weight:normal;">M</div><div class="t" style="left:970.22px;width:60px;text-align:center;top:358.06px;font-size:16px;color:#3b3b3b;font-weight:normal;">R</div><div class="t" style="left:1057.77px;width:60px;text-align:center;top:358.06px;font-size:16px;color:#3b3b3b;font-weight:normal;">S</div><div class="t" style="left:1145.32px;width:60px;text-align:center;top:358.06px;font-size:16px;color:#0e6b3a;font-weight:normal;">T</div><div class="t" style="left:1232.87px;width:60px;text-align:center;top:358.06px;font-size:16px;color:#3b3b3b;font-weight:normal;">U</div><div class="t" style="left:1320.42px;width:60px;text-align:center;top:358.06px;font-size:16px;color:#3b3b3b;font-weight:normal;">V</div><div class="t" style="left:1407.97px;width:60px;text-align:center;top:358.06px;font-size:16px;color:#3b3b3b;font-weight:normal;">W</div><div class="t" style="left:1495.52px;width:60px;text-align:center;top:358.06px;font-size:16px;color:#3b3b3b;font-weight:normal;">X</div><div style="position:absolute;left:4.00px;top:401.05px;width:30.00px;height:1.00px;background:#dedede;"></div><div class="t" style="left:0.50px;width:34px;text-align:center;top:381.58px;font-size:16.5px;color:#3b3b3b;font-weight:normal;">1</div><div style="position:absolute;left:4.00px;top:425.60px;width:30.00px;height:1.00px;background:#dedede;"></div><div class="t" style="left:0.50px;width:34px;text-align:center;top:406.13px;font-size:16.5px;color:#3b3b3b;font-weight:normal;">2</div><div style="position:absolute;left:4.00px;top:450.15px;width:30.00px;height:1.00px;background:#dedede;"></div><div class="t" style="left:0.50px;width:34px;text-align:center;top:430.68px;font-size:16.5px;color:#3b3b3b;font-weight:normal;">3</div><div style="position:absolute;left:4.00px;top:474.70px;width:30.00px;height:1.00px;background:#dedede;"></div><div class="t" style="left:0.50px;width:34px;text-align:center;top:455.23px;font-size:16.5px;color:#3b3b3b;font-weight:normal;">4</div><div style="position:absolute;left:4.00px;top:499.25px;width:30.00px;height:1.00px;background:#dedede;"></div><div class="t" style="left:0.50px;width:34px;text-align:center;top:479.78px;font-size:16.5px;color:#3b3b3b;font-weight:normal;">5</div><div style="position:absolute;left:0.00px;top:499.75px;width:34.00px;height:24.55px;background:#e0e0e0;border-top:1px solid #d0d0d0;border-bottom:1px solid #d0d0d0;box-sizing:border-box;"></div><div style="position:absolute;left:33.00px;top:499.75px;width:2.00px;height:24.55px;background:#1a7343;"></div><div style="position:absolute;left:4.00px;top:523.80px;width:30.00px;height:1.00px;background:#dedede;"></div><div class="t" style="left:0.50px;width:34px;text-align:center;top:504.33px;font-size:16.5px;color:#0e6b3a;font-weight:normal;">6</div><div style="position:absolute;left:4.00px;top:548.35px;width:30.00px;height:1.00px;background:#dedede;"></div><div class="t" style="left:0.50px;width:34px;text-align:center;top:528.88px;font-size:16.5px;color:#3b3b3b;font-weight:normal;">7</div><div style="position:absolute;left:4.00px;top:572.90px;width:30.00px;height:1.00px;background:#dedede;"></div><div class="t" style="left:0.50px;width:34px;text-align:center;top:553.43px;font-size:16.5px;color:#3b3b3b;font-weight:normal;">8</div><div style="position:absolute;left:4.00px;top:597.45px;width:30.00px;height:1.00px;background:#dedede;"></div><div class="t" style="left:0.50px;width:34px;text-align:center;top:577.98px;font-size:16.5px;color:#3b3b3b;font-weight:normal;">9</div><div style="position:absolute;left:4.00px;top:622.00px;width:30.00px;height:1.00px;background:#dedede;"></div><div class="t" style="left:0.50px;width:34px;text-align:center;top:602.53px;font-size:16.5px;color:#3b3b3b;font-weight:normal;">10</div><div style="position:absolute;left:4.00px;top:646.55px;width:30.00px;height:1.00px;background:#dedede;"></div><div class="t" style="left:0.50px;width:34px;text-align:center;top:627.08px;font-size:16.5px;color:#3b3b3b;font-weight:normal;">11</div><div style="position:absolute;left:4.00px;top:671.10px;width:30.00px;height:1.00px;background:#dedede;"></div><div class="t" style="left:0.50px;width:34px;text-align:center;top:651.63px;font-size:16.5px;color:#3b3b3b;font-weight:normal;">12</div><div style="position:absolute;left:4.00px;top:695.65px;width:30.00px;height:1.00px;background:#dedede;"></div><div class="t" style="left:0.50px;width:34px;text-align:center;top:676.18px;font-size:16.5px;color:#3b3b3b;font-weight:normal;">13</div><div style="position:absolute;left:4.00px;top:720.20px;width:30.00px;height:1.00px;background:#dedede;"></div><div class="t" style="left:0.50px;width:34px;text-align:center;top:700.73px;font-size:16.5px;color:#3b3b3b;font-weight:normal;">14</div><div style="position:absolute;left:4.00px;top:744.75px;width:30.00px;height:1.00px;background:#dedede;"></div><div class="t" style="left:0.50px;width:34px;text-align:center;top:725.28px;font-size:16.5px;color:#3b3b3b;font-weight:normal;">15</div><div style="position:absolute;left:4.00px;top:769.30px;width:30.00px;height:1.00px;background:#dedede;"></div><div class="t" style="left:0.50px;width:34px;text-align:center;top:749.83px;font-size:16.5px;color:#3b3b3b;font-weight:normal;">16</div><div style="position:absolute;left:4.00px;top:793.85px;width:30.00px;height:1.00px;background:#dedede;"></div><div class="t" style="left:0.50px;width:34px;text-align:center;top:774.38px;font-size:16.5px;color:#3b3b3b;font-weight:normal;">17</div><div style="position:absolute;left:4.00px;top:818.40px;width:30.00px;height:1.00px;background:#dedede;"></div><div class="t" style="left:0.50px;width:34px;text-align:center;top:798.93px;font-size:16.5px;color:#3b3b3b;font-weight:normal;">18</div><div style="position:absolute;left:4.00px;top:842.95px;width:30.00px;height:1.00px;background:#dedede;"></div><div class="t" style="left:0.50px;width:34px;text-align:center;top:823.48px;font-size:16.5px;color:#3b3b3b;font-weight:normal;">19</div><div style="position:absolute;left:4.00px;top:867.50px;width:30.00px;height:1.00px;background:#dedede;"></div><div class="t" style="left:0.50px;width:34px;text-align:center;top:848.03px;font-size:16.5px;color:#3b3b3b;font-weight:normal;">20</div><div style="position:absolute;left:4.00px;top:892.05px;width:30.00px;height:1.00px;background:#dedede;"></div><div class="t" style="left:0.50px;width:34px;text-align:center;top:872.58px;font-size:16.5px;color:#3b3b3b;font-weight:normal;">21</div><div style="position:absolute;left:4.00px;top:916.60px;width:30.00px;height:1.00px;background:#dedede;"></div><div class="t" style="left:0.50px;width:34px;text-align:center;top:897.13px;font-size:16.5px;color:#3b3b3b;font-weight:normal;">22</div><div style="position:absolute;left:4.00px;top:941.15px;width:30.00px;height:1.00px;background:#dedede;"></div><div class="t" style="left:0.50px;width:34px;text-align:center;top:921.68px;font-size:16.5px;color:#3b3b3b;font-weight:normal;">23</div><div style="position:absolute;left:4.00px;top:965.70px;width:30.00px;height:1.00px;background:#dedede;"></div><div class="t" style="left:0.50px;width:34px;text-align:center;top:946.23px;font-size:16.5px;color:#3b3b3b;font-weight:normal;">24</div><div style="position:absolute;left:4.00px;top:990.25px;width:30.00px;height:1.00px;background:#dedede;"></div><div class="t" style="left:0.50px;width:34px;text-align:center;top:970.78px;font-size:16.5px;color:#3b3b3b;font-weight:normal;">25</div><div style="position:absolute;left:4.00px;top:1014.80px;width:30.00px;height:1.00px;background:#dedede;"></div><div class="t" style="left:0.50px;width:34px;text-align:center;top:995.33px;font-size:16.5px;color:#3b3b3b;font-weight:normal;">26</div><div style="position:absolute;left:4.00px;top:1039.35px;width:30.00px;height:1.00px;background:#dedede;"></div><div class="t" style="left:0.50px;width:34px;text-align:center;top:1019.88px;font-size:16.5px;color:#3b3b3b;font-weight:normal;">27</div><div style="position:absolute;left:4.00px;top:1063.90px;width:30.00px;height:1.00px;background:#dedede;"></div><div class="t" style="left:0.50px;width:34px;text-align:center;top:1044.43px;font-size:16.5px;color:#3b3b3b;font-weight:normal;">28</div><div style="position:absolute;left:4.00px;top:1088.45px;width:30.00px;height:1.00px;background:#dedede;"></div><div class="t" style="left:0.50px;width:34px;text-align:center;top:1068.98px;font-size:16.5px;color:#3b3b3b;font-weight:normal;">29</div><div style="position:absolute;left:168.50px;top:499.75px;width:612.85px;height:392.80px;background:#f2f2f2;"></div><div style="position:absolute;left:168.50px;top:523.80px;width:612.85px;height:1.00px;background:#e0e0e0;"></div><div style="position:absolute;left:168.50px;top:548.35px;width:612.85px;height:1.00px;background:#e0e0e0;"></div><div style="position:absolute;left:168.50px;top:572.90px;width:612.85px;height:1.00px;background:#e0e0e0;"></div><div style="position:absolute;left:168.50px;top:597.45px;width:612.85px;height:1.00px;background:#e0e0e0;"></div><div style="position:absolute;left:168.50px;top:622.00px;width:612.85px;height:1.00px;background:#e0e0e0;"></div><div style="position:absolute;left:168.50px;top:646.55px;width:612.85px;height:1.00px;background:#e0e0e0;"></div><div style="position:absolute;left:168.50px;top:671.10px;width:612.85px;height:1.00px;background:#e0e0e0;"></div><div style="position:absolute;left:168.50px;top:695.65px;width:612.85px;height:1.00px;background:#e0e0e0;"></div><div style="position:absolute;left:168.50px;top:720.20px;width:612.85px;height:1.00px;background:#e0e0e0;"></div><div style="position:absolute;left:168.50px;top:744.75px;width:612.85px;height:1.00px;background:#e0e0e0;"></div><div style="position:absolute;left:168.50px;top:769.30px;width:612.85px;height:1.00px;background:#e0e0e0;"></div><div style="position:absolute;left:168.50px;top:793.85px;width:612.85px;height:1.00px;background:#e0e0e0;"></div><div style="position:absolute;left:168.50px;top:818.40px;width:612.85px;height:1.00px;background:#e0e0e0;"></div><div style="position:absolute;left:168.50px;top:842.95px;width:612.85px;height:1.00px;background:#e0e0e0;"></div><div style="position:absolute;left:168.50px;top:867.50px;width:612.85px;height:1.00px;background:#e0e0e0;"></div><div style="position:absolute;left:255.55px;top:499.75px;width:1.00px;height:392.80px;background:#e0e0e0;"></div><div style="position:absolute;left:343.10px;top:499.75px;width:1.00px;height:392.80px;background:#e0e0e0;"></div><div style="position:absolute;left:430.65px;top:499.75px;width:1.00px;height:392.80px;background:#e0e0e0;"></div><div style="position:absolute;left:518.20px;top:499.75px;width:1.00px;height:392.80px;background:#e0e0e0;"></div><div style="position:absolute;left:605.75px;top:499.75px;width:1.00px;height:392.80px;background:#e0e0e0;"></div><div style="position:absolute;left:170.00px;top:500.75px;width:84.55px;height:23.55px;background:#c7eaf9;"></div><div style="position:absolute;left:170.00px;top:524.30px;width:84.55px;height:23.55px;background:#ffc7ce;"></div><div style="position:absolute;left:170.00px;top:794.35px;width:84.55px;height:23.55px;background:#ffc7ce;"></div><div style="position:absolute;left:168.00px;top:474.20px;width:614.35px;height:418.85px;border:1.5px solid #111;box-sizing:border-box;"></div><div style="position:absolute;left:168.50px;top:498.75px;width:612.85px;height:1.50px;background:#111;"></div><div style="position:absolute;left:693.05px;top:475.20px;width:1.50px;height:417.35px;background:#111;"></div><div class="t" style="left:167.28px;width:90px;text-align:center;top:480.28px;font-size:16.5px;color:#000;font-weight:bold;">Staff</div><div class="t" style="left:254.82px;width:90px;text-align:center;top:480.28px;font-size:16.5px;color:#000;font-weight:bold;">Year</div><div class="t" style="left:342.38px;width:90px;text-align:center;top:480.28px;font-size:16.5px;color:#000;font-weight:bold;">QTR1</div><div class="t" style="left:429.93px;width:90px;text-align:center;top:480.28px;font-size:16.5px;color:#000;font-weight:bold;">QTR2</div><div class="t" style="left:517.48px;width:90px;text-align:center;top:480.28px;font-size:16.5px;color:#000;font-weight:bold;">QTR3</div><div class="t" style="left:605.02px;width:90px;text-align:center;top:480.28px;font-size:16.5px;color:#000;font-weight:bold;">QTR4</div><div class="t" style="left:692.57px;width:90px;text-align:center;top:480.28px;font-size:16.5px;color:#000;font-weight:bold;">YTD</div><div class="t" style="left:172.00px;top:504.53px;font-size:16.5px;color:#000;font-weight:normal;">Fred</div><div class="t" style="left:259.82px;width:80px;text-align:center;top:504.53px;font-size:16.5px;color:#000;font-weight:normal;">2020</div><div class="t" style="left:347.65px;width:80px;text-align:right;top:504.53px;font-size:16.5px;color:#000;font-weight:normal;">878</div><div class="t" style="left:435.20px;width:80px;text-align:right;top:504.53px;font-size:16.5px;color:#000;font-weight:normal;">833</div><div class="t" style="left:522.75px;width:80px;text-align:right;top:504.53px;font-size:16.5px;color:#000;font-weight:normal;">952</div><div class="t" style="left:610.30px;width:80px;text-align:right;top:504.53px;font-size:16.5px;color:#000;font-weight:normal;">717</div><div class="t" style="left:697.85px;width:80px;text-align:right;top:504.53px;font-size:16.5px;color:#000;font-weight:normal;">3380</div><div class="t" style="left:172.00px;top:529.08px;font-size:16.5px;color:#9c0006;font-weight:normal;">John</div><div class="t" style="left:259.82px;width:80px;text-align:center;top:529.08px;font-size:16.5px;color:#000;font-weight:normal;">2020</div><div class="t" style="left:347.65px;width:80px;text-align:right;top:529.08px;font-size:16.5px;color:#000;font-weight:normal;">916</div><div class="t" style="left:435.20px;width:80px;text-align:right;top:529.08px;font-size:16.5px;color:#000;font-weight:normal;">553</div><div class="t" style="left:522.75px;width:80px;text-align:right;top:529.08px;font-size:16.5px;color:#000;font-weight:normal;">845</div><div class="t" style="left:610.30px;width:80px;text-align:right;top:529.08px;font-size:16.5px;color:#000;font-weight:normal;">867</div><div class="t" style="left:697.85px;width:80px;text-align:right;top:529.08px;font-size:16.5px;color:#000;font-weight:normal;">3181</div><div class="t" style="left:172.00px;top:553.63px;font-size:16.5px;color:#000;font-weight:normal;">Lisa</div><div class="t" style="left:259.82px;width:80px;text-align:center;top:553.63px;font-size:16.5px;color:#000;font-weight:normal;">2020</div><div class="t" style="left:347.65px;width:80px;text-align:right;top:553.63px;font-size:16.5px;color:#000;font-weight:normal;">723</div><div class="t" style="left:435.20px;width:80px;text-align:right;top:553.63px;font-size:16.5px;color:#000;font-weight:normal;">563</div><div class="t" style="left:522.75px;width:80px;text-align:right;top:553.63px;font-size:16.5px;color:#000;font-weight:normal;">584</div><div class="t" style="left:610.30px;width:80px;text-align:right;top:553.63px;font-size:16.5px;color:#000;font-weight:normal;">536</div><div class="t" style="left:697.85px;width:80px;text-align:right;top:553.63px;font-size:16.5px;color:#000;font-weight:normal;">2406</div><div class="t" style="left:172.00px;top:578.18px;font-size:16.5px;color:#000;font-weight:normal;">Steve</div><div class="t" style="left:259.82px;width:80px;text-align:center;top:578.18px;font-size:16.5px;color:#000;font-weight:normal;">2020</div><div class="t" style="left:347.65px;width:80px;text-align:right;top:578.18px;font-size:16.5px;color:#000;font-weight:normal;">776</div><div class="t" style="left:435.20px;width:80px;text-align:right;top:578.18px;font-size:16.5px;color:#000;font-weight:normal;">643</div><div class="t" style="left:522.75px;width:80px;text-align:right;top:578.18px;font-size:16.5px;color:#000;font-weight:normal;">651</div><div class="t" style="left:610.30px;width:80px;text-align:right;top:578.18px;font-size:16.5px;color:#000;font-weight:normal;">957</div><div class="t" style="left:697.85px;width:80px;text-align:right;top:578.18px;font-size:16.5px;color:#000;font-weight:normal;">3028</div><div class="t" style="left:172.00px;top:602.73px;font-size:16.5px;color:#000;font-weight:normal;">Manny</div><div class="t" style="left:259.82px;width:80px;text-align:center;top:602.73px;font-size:16.5px;color:#000;font-weight:normal;">2021</div><div class="t" style="left:347.65px;width:80px;text-align:right;top:602.73px;font-size:16.5px;color:#000;font-weight:normal;">966</div><div class="t" style="left:435.20px;width:80px;text-align:right;top:602.73px;font-size:16.5px;color:#000;font-weight:normal;">917</div><div class="t" style="left:522.75px;width:80px;text-align:right;top:602.73px;font-size:16.5px;color:#000;font-weight:normal;">1047</div><div class="t" style="left:610.30px;width:80px;text-align:right;top:602.73px;font-size:16.5px;color:#000;font-weight:normal;">788</div><div class="t" style="left:697.85px;width:80px;text-align:right;top:602.73px;font-size:16.5px;color:#000;font-weight:normal;">3718</div><div class="t" style="left:172.00px;top:627.28px;font-size:16.5px;color:#000;font-weight:normal;">Alex</div><div class="t" style="left:259.82px;width:80px;text-align:center;top:627.28px;font-size:16.5px;color:#000;font-weight:normal;">2021</div><div class="t" style="left:347.65px;width:80px;text-align:right;top:627.28px;font-size:16.5px;color:#000;font-weight:normal;">1007</div><div class="t" style="left:435.20px;width:80px;text-align:right;top:627.28px;font-size:16.5px;color:#000;font-weight:normal;">608</div><div class="t" style="left:522.75px;width:80px;text-align:right;top:627.28px;font-size:16.5px;color:#000;font-weight:normal;">930</div><div class="t" style="left:610.30px;width:80px;text-align:right;top:627.28px;font-size:16.5px;color:#000;font-weight:normal;">954</div><div class="t" style="left:697.85px;width:80px;text-align:right;top:627.28px;font-size:16.5px;color:#000;font-weight:normal;">3499</div><div class="t" style="left:172.00px;top:651.83px;font-size:16.5px;color:#000;font-weight:normal;">Born</div><div class="t" style="left:259.82px;width:80px;text-align:center;top:651.83px;font-size:16.5px;color:#000;font-weight:normal;">2021</div><div class="t" style="left:347.65px;width:80px;text-align:right;top:651.83px;font-size:16.5px;color:#000;font-weight:normal;">796</div><div class="t" style="left:435.20px;width:80px;text-align:right;top:651.83px;font-size:16.5px;color:#000;font-weight:normal;">619</div><div class="t" style="left:522.75px;width:80px;text-align:right;top:651.83px;font-size:16.5px;color:#000;font-weight:normal;">643</div><div class="t" style="left:610.30px;width:80px;text-align:right;top:651.83px;font-size:16.5px;color:#000;font-weight:normal;">589</div><div class="t" style="left:697.85px;width:80px;text-align:right;top:651.83px;font-size:16.5px;color:#000;font-weight:normal;">2647</div><div class="t" style="left:172.00px;top:676.38px;font-size:16.5px;color:#000;font-weight:normal;">Mitch</div><div class="t" style="left:259.82px;width:80px;text-align:center;top:676.38px;font-size:16.5px;color:#000;font-weight:normal;">2021</div><div class="t" style="left:347.65px;width:80px;text-align:right;top:676.38px;font-size:16.5px;color:#000;font-weight:normal;">854</div><div class="t" style="left:435.20px;width:80px;text-align:right;top:676.38px;font-size:16.5px;color:#000;font-weight:normal;">707</div><div class="t" style="left:522.75px;width:80px;text-align:right;top:676.38px;font-size:16.5px;color:#000;font-weight:normal;">716</div><div class="t" style="left:610.30px;width:80px;text-align:right;top:676.38px;font-size:16.5px;color:#000;font-weight:normal;">1053</div><div class="t" style="left:697.85px;width:80px;text-align:right;top:676.38px;font-size:16.5px;color:#000;font-weight:normal;">3330</div><div class="t" style="left:172.00px;top:700.93px;font-size:16.5px;color:#000;font-weight:normal;">Frank</div><div class="t" style="left:259.82px;width:80px;text-align:center;top:700.93px;font-size:16.5px;color:#000;font-weight:normal;">2022</div><div class="t" style="left:347.65px;width:80px;text-align:right;top:700.93px;font-size:16.5px;color:#000;font-weight:normal;">1010</div><div class="t" style="left:435.20px;width:80px;text-align:right;top:700.93px;font-size:16.5px;color:#000;font-weight:normal;">958</div><div class="t" style="left:522.75px;width:80px;text-align:right;top:700.93px;font-size:16.5px;color:#000;font-weight:normal;">1094</div><div class="t" style="left:610.30px;width:80px;text-align:right;top:700.93px;font-size:16.5px;color:#000;font-weight:normal;">824</div><div class="t" style="left:697.85px;width:80px;text-align:right;top:700.93px;font-size:16.5px;color:#000;font-weight:normal;">3887</div><div class="t" style="left:172.00px;top:725.48px;font-size:16.5px;color:#000;font-weight:normal;">Johnnie</div><div class="t" style="left:259.82px;width:80px;text-align:center;top:725.48px;font-size:16.5px;color:#000;font-weight:normal;">2022</div><div class="t" style="left:347.65px;width:80px;text-align:right;top:725.48px;font-size:16.5px;color:#000;font-weight:normal;">1053</div><div class="t" style="left:435.20px;width:80px;text-align:right;top:725.48px;font-size:16.5px;color:#000;font-weight:normal;">636</div><div class="t" style="left:522.75px;width:80px;text-align:right;top:725.48px;font-size:16.5px;color:#000;font-weight:normal;">972</div><div class="t" style="left:610.30px;width:80px;text-align:right;top:725.48px;font-size:16.5px;color:#000;font-weight:normal;">997</div><div class="t" style="left:697.85px;width:80px;text-align:right;top:725.48px;font-size:16.5px;color:#000;font-weight:normal;">3658</div><div class="t" style="left:172.00px;top:750.03px;font-size:16.5px;color:#000;font-weight:normal;">Markie</div><div class="t" style="left:259.82px;width:80px;text-align:center;top:750.03px;font-size:16.5px;color:#000;font-weight:normal;">2022</div><div class="t" style="left:347.65px;width:80px;text-align:right;top:750.03px;font-size:16.5px;color:#000;font-weight:normal;">832</div><div class="t" style="left:435.20px;width:80px;text-align:right;top:750.03px;font-size:16.5px;color:#000;font-weight:normal;">647</div><div class="t" style="left:522.75px;width:80px;text-align:right;top:750.03px;font-size:16.5px;color:#000;font-weight:normal;">672</div><div class="t" style="left:610.30px;width:80px;text-align:right;top:750.03px;font-size:16.5px;color:#000;font-weight:normal;">616</div><div class="t" style="left:697.85px;width:80px;text-align:right;top:750.03px;font-size:16.5px;color:#000;font-weight:normal;">2767</div><div class="t" style="left:172.00px;top:774.58px;font-size:16.5px;color:#000;font-weight:normal;">Joey</div><div class="t" style="left:259.82px;width:80px;text-align:center;top:774.58px;font-size:16.5px;color:#000;font-weight:normal;">2022</div><div class="t" style="left:347.65px;width:80px;text-align:right;top:774.58px;font-size:16.5px;color:#000;font-weight:normal;">893</div><div class="t" style="left:435.20px;width:80px;text-align:right;top:774.58px;font-size:16.5px;color:#000;font-weight:normal;">739</div><div class="t" style="left:522.75px;width:80px;text-align:right;top:774.58px;font-size:16.5px;color:#000;font-weight:normal;">749</div><div class="t" style="left:610.30px;width:80px;text-align:right;top:774.58px;font-size:16.5px;color:#000;font-weight:normal;">1101</div><div class="t" style="left:697.85px;width:80px;text-align:right;top:774.58px;font-size:16.5px;color:#000;font-weight:normal;">3482</div><div class="t" style="left:172.00px;top:799.13px;font-size:16.5px;color:#9c0006;font-weight:normal;">John</div><div class="t" style="left:259.82px;width:80px;text-align:center;top:799.13px;font-size:16.5px;color:#000;font-weight:normal;">2023</div><div class="t" style="left:347.65px;width:80px;text-align:right;top:799.13px;font-size:16.5px;color:#000;font-weight:normal;">1054</div><div class="t" style="left:435.20px;width:80px;text-align:right;top:799.13px;font-size:16.5px;color:#000;font-weight:normal;">1000</div><div class="t" style="left:522.75px;width:80px;text-align:right;top:799.13px;font-size:16.5px;color:#000;font-weight:normal;">1142</div><div class="t" style="left:610.30px;width:80px;text-align:right;top:799.13px;font-size:16.5px;color:#000;font-weight:normal;">860</div><div class="t" style="left:697.85px;width:80px;text-align:right;top:799.13px;font-size:16.5px;color:#000;font-weight:normal;">4056</div><div class="t" style="left:172.00px;top:823.68px;font-size:16.5px;color:#000;font-weight:normal;">Max</div><div class="t" style="left:259.82px;width:80px;text-align:center;top:823.68px;font-size:16.5px;color:#000;font-weight:normal;">2023</div><div class="t" style="left:347.65px;width:80px;text-align:right;top:823.68px;font-size:16.5px;color:#000;font-weight:normal;">1099</div><div class="t" style="left:435.20px;width:80px;text-align:right;top:823.68px;font-size:16.5px;color:#000;font-weight:normal;">664</div><div class="t" style="left:522.75px;width:80px;text-align:right;top:823.68px;font-size:16.5px;color:#000;font-weight:normal;">1015</div><div class="t" style="left:610.30px;width:80px;text-align:right;top:823.68px;font-size:16.5px;color:#000;font-weight:normal;">1040</div><div class="t" style="left:697.85px;width:80px;text-align:right;top:823.68px;font-size:16.5px;color:#000;font-weight:normal;">3817</div><div class="t" style="left:172.00px;top:848.23px;font-size:16.5px;color:#000;font-weight:normal;">Louis</div><div class="t" style="left:259.82px;width:80px;text-align:center;top:848.23px;font-size:16.5px;color:#000;font-weight:normal;">2023</div><div class="t" style="left:347.65px;width:80px;text-align:right;top:848.23px;font-size:16.5px;color:#000;font-weight:normal;">868</div><div class="t" style="left:435.20px;width:80px;text-align:right;top:848.23px;font-size:16.5px;color:#000;font-weight:normal;">675</div><div class="t" style="left:522.75px;width:80px;text-align:right;top:848.23px;font-size:16.5px;color:#000;font-weight:normal;">701</div><div class="t" style="left:610.30px;width:80px;text-align:right;top:848.23px;font-size:16.5px;color:#000;font-weight:normal;">643</div><div class="t" style="left:697.85px;width:80px;text-align:right;top:848.23px;font-size:16.5px;color:#000;font-weight:normal;">2887</div><div class="t" style="left:172.00px;top:872.78px;font-size:16.5px;color:#000;font-weight:normal;">David</div><div class="t" style="left:259.82px;width:80px;text-align:center;top:872.78px;font-size:16.5px;color:#000;font-weight:normal;">2023</div><div class="t" style="left:347.65px;width:80px;text-align:right;top:872.78px;font-size:16.5px;color:#000;font-weight:normal;">932</div><div class="t" style="left:435.20px;width:80px;text-align:right;top:872.78px;font-size:16.5px;color:#000;font-weight:normal;">771</div><div class="t" style="left:522.75px;width:80px;text-align:right;top:872.78px;font-size:16.5px;color:#000;font-weight:normal;">782</div><div class="t" style="left:610.30px;width:80px;text-align:right;top:872.78px;font-size:16.5px;color:#000;font-weight:normal;">1148</div><div class="t" style="left:697.85px;width:80px;text-align:right;top:872.78px;font-size:16.5px;color:#000;font-weight:normal;">3633</div><svg style="position:absolute;left:247px;top:500.5px;" width="8" height="8" viewBox="0 0 8 8"><path d="M0.5 0.5 H7.5 V7.5 Z" fill="#c8361f"/></svg><div style="position:absolute;left:1044.00px;top:499.75px;width:87.55px;height:24.55px;background:#c7eaf9;"></div><div style="position:absolute;left:1131.55px;top:499.75px;width:87.55px;height:24.55px;background:#c7eaf9;"></div><div style="position:absolute;left:1043.50px;top:474.20px;width:176.60px;height:26.05px;border:1.5px solid #111;box-sizing:border-box;"></div><div style="position:absolute;left:1131.55px;top:499.75px;width:88.55px;height:393.80px;border:1px solid #7ea6d6;box-sizing:border-box;"></div><div class="t" style="left:1042.77px;width:90px;text-align:center;top:480.28px;font-size:16.5px;color:#000;font-weight:bold;">Staff</div><div class="t" style="left:1130.32px;width:90px;text-align:center;top:480.28px;font-size:16.5px;color:#000;font-weight:bold;">QTR1</div><div class="t" style="left:1047.50px;top:504.53px;font-size:16.5px;color:#000;font-weight:normal;">Fred</div><div class="t" style="left:1135.60px;width:80px;text-align:right;top:504.53px;font-size:16.5px;color:#000;font-weight:normal;">878</div><div class="t" style="left:1047.50px;top:529.08px;font-size:16.5px;color:#000;font-weight:normal;">John</div><div class="t" style="left:1135.60px;width:80px;text-align:right;top:529.08px;font-size:16.5px;color:#000;font-weight:normal;">916</div><div class="t" style="left:1047.50px;top:553.63px;font-size:16.5px;color:#000;font-weight:normal;">Lisa</div><div class="t" style="left:1135.60px;width:80px;text-align:right;top:553.63px;font-size:16.5px;color:#000;font-weight:normal;">723</div><div class="t" style="left:1047.50px;top:578.18px;font-size:16.5px;color:#000;font-weight:normal;">Steve</div><div class="t" style="left:1135.60px;width:80px;text-align:right;top:578.18px;font-size:16.5px;color:#000;font-weight:normal;">776</div><div class="t" style="left:1047.50px;top:602.73px;font-size:16.5px;color:#000;font-weight:normal;">Manny</div><div class="t" style="left:1135.60px;width:80px;text-align:right;top:602.73px;font-size:16.5px;color:#000;font-weight:normal;">966</div><div class="t" style="left:1047.50px;top:627.28px;font-size:16.5px;color:#000;font-weight:normal;">Alex</div><div class="t" style="left:1135.60px;width:80px;text-align:right;top:627.28px;font-size:16.5px;color:#000;font-weight:normal;">1007</div><div class="t" style="left:1047.50px;top:651.83px;font-size:16.5px;color:#000;font-weight:normal;">Born</div><div class="t" style="left:1135.60px;width:80px;text-align:right;top:651.83px;font-size:16.5px;color:#000;font-weight:normal;">796</div><div class="t" style="left:1047.50px;top:676.38px;font-size:16.5px;color:#000;font-weight:normal;">Mitch</div><div class="t" style="left:1135.60px;width:80px;text-align:right;top:676.38px;font-size:16.5px;color:#000;font-weight:normal;">854</div><div class="t" style="left:1047.50px;top:700.93px;font-size:16.5px;color:#000;font-weight:normal;">Frank</div><div class="t" style="left:1135.60px;width:80px;text-align:right;top:700.93px;font-size:16.5px;color:#000;font-weight:normal;">1010</div><div class="t" style="left:1047.50px;top:725.48px;font-size:16.5px;color:#000;font-weight:normal;">Johnnie</div><div class="t" style="left:1135.60px;width:80px;text-align:right;top:725.48px;font-size:16.5px;color:#000;font-weight:normal;">1053</div><div class="t" style="left:1047.50px;top:750.03px;font-size:16.5px;color:#000;font-weight:normal;">Markie</div><div class="t" style="left:1135.60px;width:80px;text-align:right;top:750.03px;font-size:16.5px;color:#000;font-weight:normal;">832</div><div class="t" style="left:1047.50px;top:774.58px;font-size:16.5px;color:#000;font-weight:normal;">Joey</div><div class="t" style="left:1135.60px;width:80px;text-align:right;top:774.58px;font-size:16.5px;color:#000;font-weight:normal;">893</div><div class="t" style="left:1047.50px;top:799.13px;font-size:16.5px;color:#000;font-weight:normal;">John</div><div class="t" style="left:1135.60px;width:80px;text-align:right;top:799.13px;font-size:16.5px;color:#000;font-weight:normal;">916</div><div class="t" style="left:1047.50px;top:823.68px;font-size:16.5px;color:#000;font-weight:normal;">Max</div><div class="t" style="left:1135.60px;width:80px;text-align:right;top:823.68px;font-size:16.5px;color:#000;font-weight:normal;">1099</div><div class="t" style="left:1047.50px;top:848.23px;font-size:16.5px;color:#000;font-weight:normal;">Louis</div><div class="t" style="left:1135.60px;width:80px;text-align:right;top:848.23px;font-size:16.5px;color:#000;font-weight:normal;">868</div><div class="t" style="left:1047.50px;top:872.78px;font-size:16.5px;color:#000;font-weight:normal;">David</div><div class="t" style="left:1135.60px;width:80px;text-align:right;top:872.78px;font-size:16.5px;color:#000;font-weight:normal;">932</div><div style="position:absolute;left:1131.05px;top:499.25px;width:89.55px;height:26.05px;border:2px solid #1e7145;box-sizing:border-box;"></div><div style="position:absolute;left:1216.10px;top:521.30px;width:5.00px;height:5.00px;background:#107c41;border:1px solid #fff;box-sizing:content-box;"></div><div class="t" style="left:785.00px;width:80px;text-align:center;top:381.03px;font-size:16.5px;color:#7f7f7f;font-weight:normal;">Data</div><div class="t" style="left:1047.10px;top:406.13px;font-size:16.5px;color:#000;font-weight:normal;">Dynamic XLookup,&nbsp; Data Range, No #, Multiple-Criteria</div><div class="t" style="left:1135.40px;top:945.82px;font-size:16.4px;color:#808080;font-weight:normal;">=XLOOKUP(E6:E21,$E$6:$E$21,$G$6:$G$21)</div><div style="position:absolute;left:166.50px;top:497.75px;width:90.05px;height:395.30px;border:3px solid #0000ff;box-sizing:border-box;"></div><div style="position:absolute;left:341.60px;top:497.75px;width:90.05px;height:395.30px;border:3px solid #0000ff;box-sizing:border-box;"></div><div style="position:absolute;left:190.00px;top:510.80px;width:954.00px;height:2.60px;background:#0000ff;"></div><div style="position:absolute;left:186.40px;top:508.50px;width:7.40px;height:7.40px;background:#0000ff;border-radius:50%;"></div><div style="position:absolute;left:361.20px;top:508.50px;width:7.40px;height:7.40px;background:#0000ff;border-radius:50%;"></div><svg style="position:absolute;left:1142px;top:508px;" width="12" height="8" viewBox="0 0 12 8"><path d="M0 0.6 L11.2 4.1 L0 7.6 Z" fill="#0000ff"/></svg><svg style="position:absolute;left:0;top:0" width="1536" height="1053" viewBox="0 0 1536 1053">
<defs><filter id="sh" x="-10%" y="-10%" width="120%" height="130%"><feGaussianBlur in="SourceAlpha" stdDeviation="1.2"/><feOffset dx="1" dy="2"/><feComponentTransfer><feFuncA type="linear" slope="0.55"/></feComponentTransfer><feMerge><feMergeNode/><feMergeNode in="SourceGraphic"/></feMerge></filter></defs>
<g filter="url(#sh)">
<path d="M1130 486.85 L549 272.8" stroke="#0fae8c" stroke-width="6.3" stroke-dasharray="18.5 7.2" stroke-linecap="butt" fill="none"/>
<path d="M532 267 L552.3 264.6 L545.4 281.5 Z" fill="#0fae8c"/>
</g></svg>
</body></html>
